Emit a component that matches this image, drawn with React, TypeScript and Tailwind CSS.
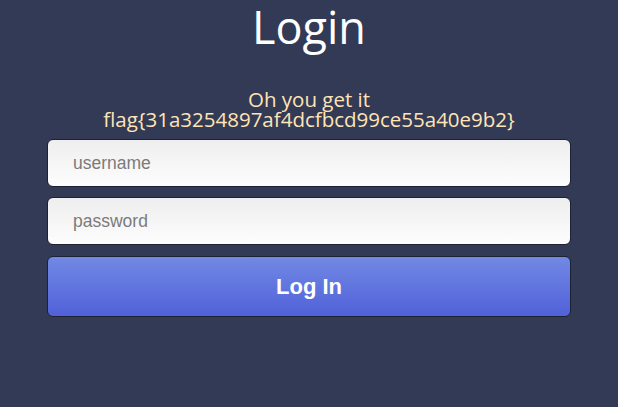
export default function App() {
  return (
    <div className="min-h-screen w-full bg-[#323a56]">
      <h1 className="text-center font-['Open_Sans',sans-serif] text-[45px] leading-[54px] font-normal text-white">
        Login
      </h1>

      <p className="mt-[35px] text-center font-['Open_Sans',sans-serif] text-[20.5px] leading-[20px] text-[#ffe4b5]">
        Oh you get it
        <br />
        flag{"{"}31a3254897af4dcfbcd99ce55a40e9b2{"}"}
      </p>

      <form className="mx-auto mt-[10px] flex w-[524px] flex-col">
        <input
          type="text"
          placeholder="username"
          className="h-[48px] w-full rounded-[6px] border border-[#1c2133] bg-[linear-gradient(180deg,#eeeeee_0%,#fdfdfd_100%)] pl-[25px] font-['Liberation_Sans',Arial,sans-serif] text-[17.5px] text-[#333] outline-none placeholder:text-[#7b7b7b]"
        />
        <input
          type="password"
          placeholder="password"
          className="mt-[10px] h-[48px] w-full rounded-[6px] border border-[#1c2133] bg-[linear-gradient(180deg,#eeeeee_0%,#fdfdfd_100%)] pl-[25px] font-['Liberation_Sans',Arial,sans-serif] text-[17.5px] text-[#333] outline-none placeholder:text-[#7b7b7b]"
        />
        <button
          type="button"
          className="mt-[11px] h-[61px] w-full rounded-[6px] border border-[#1c2133] bg-[linear-gradient(180deg,#7189e4_0%,#5161d9_100%)] font-['Liberation_Sans',Arial,sans-serif] text-[22px] font-bold text-white"
        >
          Log In
        </button>
      </form>
    </div>
  );
}
